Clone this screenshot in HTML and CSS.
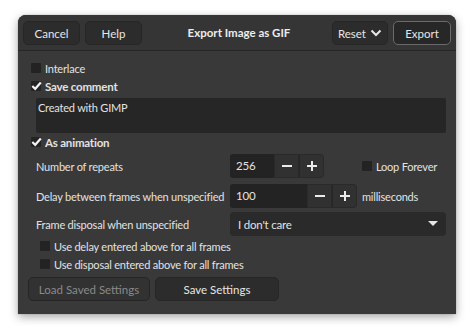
FILE: index.html
```html
<!DOCTYPE html>
<html>
<head>
<meta charset="utf-8">
<link rel="stylesheet" href="styles.css">
</head>
<body>
<div class="stage">
  <div class="window">
    <div class="header">
      <div class="hgroup">
        <button class="btn hbtn">Cancel</button>
        <button class="btn hbtn">Help</button>
      </div>
      <div class="title">Export Image as GIF</div>
      <div class="hgroup">
        <button class="btn hbtn reset">Reset
          <svg width="12" height="8" viewBox="0 0 12 8"><path d="M1.5 1.5 L6 6 L10.5 1.5" fill="none" stroke="#e6e6e6" stroke-width="2"/></svg>
        </button>
        <button class="btn hbtn export">Export</button>
      </div>
    </div>
    <div class="content">
      <div class="check-row r-interlace">
        <span class="box"></span><span class="lbl">Interlace</span>
      </div>
      <div class="check-row r-comment">
        <span class="box checked"><svg width="11" height="10" viewBox="0 0 11 10"><path d="M1.3 5 L4.2 7.8 L9.8 1.5" fill="none" stroke="#f2f2f2" stroke-width="2.2"/></svg></span><span class="lbl bold">Save comment</span>
      </div>
      <div class="comment">Created with GIMP</div>
      <div class="check-row r-anim">
        <span class="box checked"><svg width="11" height="10" viewBox="0 0 11 10"><path d="M1.3 5 L4.2 7.8 L9.8 1.5" fill="none" stroke="#f2f2f2" stroke-width="2.2"/></svg></span><span class="lbl bold">As animation</span>
      </div>
      <div class="form-row r-repeats">
        <span class="flabel">Number of repeats</span>
        <div class="spin">
          <span class="entry w-short">256</span>
          <span class="sbtn minus"><svg width="12" height="12" viewBox="0 0 12 12"><path d="M1 6 H11" stroke="#eaeaea" stroke-width="2"/></svg></span>
          <span class="sbtn plus"><svg width="12" height="12" viewBox="0 0 12 12"><path d="M1 6 H11 M6 1 V11" stroke="#eaeaea" stroke-width="2"/></svg></span>
        </div>
        <div class="loop">
          <span class="box"></span><span class="lbl">Loop Forever</span>
        </div>
      </div>
      <div class="form-row r-delay">
        <span class="flabel">Delay between frames when unspecified</span>
        <div class="spin">
          <span class="entry w-long">100</span>
          <span class="sbtn minus"><svg width="12" height="12" viewBox="0 0 12 12"><path d="M1 6 H11" stroke="#eaeaea" stroke-width="2"/></svg></span>
          <span class="sbtn plus"><svg width="12" height="12" viewBox="0 0 12 12"><path d="M1 6 H11 M6 1 V11" stroke="#eaeaea" stroke-width="2"/></svg></span>
        </div>
        <span class="unit">milliseconds</span>
      </div>
      <div class="form-row r-disposal">
        <span class="flabel">Frame disposal when unspecified</span>
        <div class="combo">
          <span>I don't care</span>
          <svg width="10" height="6" viewBox="0 0 10 6"><path d="M0 0 H10 L5 5 Z" fill="#e6e6e6"/></svg>
        </div>
      </div>
      <div class="check-row sub r-usedelay">
        <span class="box"></span><span class="lbl">Use delay entered above for all frames</span>
      </div>
      <div class="check-row sub r-usedisp">
        <span class="box"></span><span class="lbl">Use disposal entered above for all frames</span>
      </div>
      <div class="actions">
        <button class="btn abtn disabled">Load Saved Settings</button>
        <button class="btn abtn save">Save Settings</button>
      </div>
    </div>
  </div>
</div>
</body>
</html>
```
FILE: styles.css
```css
* { box-sizing: border-box; }
html, body { margin: 0; padding: 0; background: #ffffff; }
body {
  font-family: Lato, "Noto Sans", sans-serif;
  font-size: 11px;
  color: #e2e2e2;
  width: 474px;
  height: 335px;
  overflow: hidden;
  white-space: nowrap;
}
.stage { padding: 15px 0 0 18px; }
.window {
  width: 438px;
  height: 299px;
  background: #393939;
  border-radius: 8px 8px 0 0;
  box-shadow: 0 3px 10px rgba(0,0,0,0.35), 0 0 1px rgba(0,0,0,0.5);
  display: flex;
  flex-direction: column;
}
.header {
  height: 36px;
  background: #353535;
  border-radius: 8px 8px 0 0;
  border-bottom: 1px solid #262626;
  display: flex;
  align-items: flex-start;
  justify-content: space-between;
  padding: 6px 5px 0 5px;
}
.hgroup { display: flex; gap: 5px; }
.btn {
  font-family: inherit;
  font-size: 11.5px;
  color: #e6e6e6;
  background: #2c2c2c;
  border: 1px solid #262626;
  border-radius: 5px;
  height: 24px;
  padding: 0;
  display: flex;
  align-items: center;
  justify-content: center;
}
.hbtn { width: 57px; }
.reset { width: 56px; gap: 4px; }
.export { width: 58px; border: 1px solid #6a6a6a; background: #272727; }
.title {
  font-weight: bold;
  font-size: 11.5px;
  line-height: 24px;
  color: #ececec;
  padding-left: 4px;
}
.content {
  display: flex;
  flex-direction: column;
  padding: 0 10px 0 10px;
  letter-spacing: -0.2px;
}
.check-row {
  display: flex;
  align-items: center;
  height: 18px;
  padding-left: 3px;
}
.r-interlace { margin-top: 8px; }
.box {
  width: 10px;
  height: 10px;
  background: #232323;
  border-radius: 1px;
  position: relative;
  flex: none;
}
.box.checked svg { position: absolute; left: -0.5px; top: 0; }
.lbl { margin-left: 4px; }
.bold { font-weight: bold; font-size: 11.5px; }
.comment {
  margin: 3px 0 0 8px;
  height: 35px;
  background: #262626;
  padding: 3px 2px;
  border-radius: 2px;
}
.form-row {
  display: flex;
  align-items: center;
  height: 24px;
  padding-left: 8px;
}
.r-repeats { margin-top: 3px; }
.r-delay { margin-top: 6px; }
.r-disposal { margin-top: 4px; }
.flabel { width: 194px; flex: none; }
.spin { display: flex; height: 24px; }
.entry {
  background: #232323;
  height: 24px;
  line-height: 24px;
  padding-left: 6px;
  border-radius: 3px 0 0 3px;
  font-size: 11.5px;
}
.w-short { width: 44px; }
.w-long { width: 77px; }
.sbtn {
  width: 25px;
  height: 24px;
  background: #313131;
  border: 1px solid #2a2a2a;
  display: flex;
  align-items: center;
  justify-content: center;
}
.sbtn.plus { border-radius: 0 4px 4px 0; border-left: 1px solid #262626; }
.loop { display: flex; align-items: center; margin-left: 38px; }
.unit { margin-left: 5px; }
.combo {
  width: 216px;
  height: 24px;
  background: #2a2a2a;
  border-radius: 4px;
  display: flex;
  align-items: center;
  justify-content: space-between;
  padding: 0 8px 0 8px;
  font-size: 11.5px;
}
.sub { padding-left: 12px; }
.r-usedelay { margin-top: 1px; }
.actions {
  display: flex;
  gap: 5px;
  margin-top: 4px;
  letter-spacing: 0;
}
.abtn { height: 24px; }
.disabled { width: 122px; color: #8a8a8a; background: #323232; }
.save { width: 124px; }
```
